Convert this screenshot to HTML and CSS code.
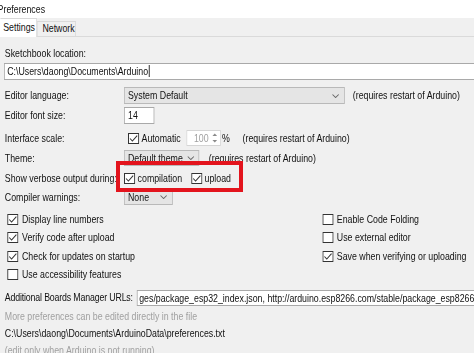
FILE: index.html
```html
<!DOCTYPE html>
<html>
<head>
<meta charset="utf-8">
<title>Preferences</title>
<link rel="stylesheet" href="styles.css">
</head>
<body>
<div class="stage">
  <div class="title">Preferences</div>
  <div class="tabs">
    <div class="tab active">Settings</div>
    <div class="tab">Network</div>
  </div>
  <div class="panel">
    <div class="top-label">Sketchbook location:</div>
    <div class="field wide path">C:\Users\daong\Documents\Arduino<span class="caret"></span></div>

    <div class="row r1">
      <span class="label">Editor language:</span>
      <div class="select lang"><span>System Default</span><svg class="chev" viewBox="0 0 7 4" preserveAspectRatio="none"><polyline points="0.5,0.5 3.5,3.5 6.5,0.5"/></svg></div>
      <span class="note">(requires restart of Arduino)</span>
    </div>
    <div class="row r2">
      <span class="label">Editor font size:</span>
      <div class="field small">14</div>
    </div>
    <div class="row r3">
      <span class="label">Interface scale:</span>
      <svg class="cb first" viewBox="0 0 11 11" preserveAspectRatio="none"><rect x="0.5" y="0.5" width="10" height="10"/><polyline points="2,5.5 4.3,8 9,2.6"/></svg>
      <span class="cb-text">Automatic</span>
      <div class="spin"><span>100</span><svg class="arrows" viewBox="0 0 6 12" preserveAspectRatio="none"><polygon points="0.5,4 3,1.5 5.5,4"/><polygon points="0.5,8 3,10.5 5.5,8"/></svg></div>
      <span class="pct">%</span>
      <span class="note n3">(requires restart of Arduino)</span>
    </div>
    <div class="row r4">
      <span class="label">Theme:</span>
      <div class="select theme"><span>Default theme</span><svg class="chev" viewBox="0 0 7 4" preserveAspectRatio="none"><polyline points="0.5,0.5 3.5,3.5 6.5,0.5"/></svg></div>
      <span class="note">(requires restart of Arduino)</span>
    </div>
    <div class="row r5">
      <span class="label">Show verbose output during:</span>
      <svg class="cb first" viewBox="0 0 11 11" preserveAspectRatio="none"><rect x="0.5" y="0.5" width="10" height="10"/><polyline points="2,5.5 4.3,8 9,2.6"/></svg>
      <span class="cb-text">compilation</span>
      <svg class="cb second" viewBox="0 0 11 11" preserveAspectRatio="none"><rect x="0.5" y="0.5" width="10" height="10"/><polyline points="2,5.5 4.3,8 9,2.6"/></svg>
      <span class="cb-text">upload</span>
    </div>
    <div class="row r6">
      <span class="label">Compiler warnings:</span>
      <div class="select none"><span>None</span><svg class="chev" viewBox="0 0 7 4" preserveAspectRatio="none"><polyline points="0.5,0.5 3.5,3.5 6.5,0.5"/></svg></div>
    </div>

    <div class="opts">
      <div class="col left">
        <div class="opt"><svg class="cb" viewBox="0 0 11 11" preserveAspectRatio="none"><rect x="0.5" y="0.5" width="10" height="10"/><polyline points="2,5.5 4.3,8 9,2.6"/></svg><span class="cb-text">Display line numbers</span></div>
        <div class="opt"><svg class="cb" viewBox="0 0 11 11" preserveAspectRatio="none"><rect x="0.5" y="0.5" width="10" height="10"/><polyline points="2,5.5 4.3,8 9,2.6"/></svg><span class="cb-text">Verify code after upload</span></div>
        <div class="opt"><svg class="cb" viewBox="0 0 11 11" preserveAspectRatio="none"><rect x="0.5" y="0.5" width="10" height="10"/><polyline points="2,5.5 4.3,8 9,2.6"/></svg><span class="cb-text">Check for updates on startup</span></div>
        <div class="opt"><svg class="cb" viewBox="0 0 11 11" preserveAspectRatio="none"><rect x="0.5" y="0.5" width="10" height="10"/></svg><span class="cb-text">Use accessibility features</span></div>
      </div>
      <div class="col right">
        <div class="opt"><svg class="cb" viewBox="0 0 11 11" preserveAspectRatio="none"><rect x="0.5" y="0.5" width="10" height="10"/></svg><span class="cb-text">Enable Code Folding</span></div>
        <div class="opt"><svg class="cb" viewBox="0 0 11 11" preserveAspectRatio="none"><rect x="0.5" y="0.5" width="10" height="10"/></svg><span class="cb-text">Use external editor</span></div>
        <div class="opt"><svg class="cb" viewBox="0 0 11 11" preserveAspectRatio="none"><rect x="0.5" y="0.5" width="10" height="10"/><polyline points="2,5.5 4.3,8 9,2.6"/></svg><span class="cb-text">Save when verifying or uploading</span></div>
      </div>
    </div>

    <div class="row urls">
      <span class="label url-label">Additional Boards Manager URLs:</span>
      <div class="field url">ges/package_esp32_index.json, http://arduino.esp8266.com/stable/package_esp8266com_index.json</div>
    </div>
    <div class="line gray first-line">More preferences can be edited directly in the file</div>
    <div class="line">C:\Users\daong\Documents\ArduinoData\preferences.txt</div>
    <div class="line gray">(edit only when Arduino is not running)</div>
  </div>
</div>
<div class="highlight"></div>
</body>
</html>
```

FILE: styles.css
```css
html, body {
  margin: 0;
  padding: 0;
  overflow: hidden;
  background: #f0f0f0;
}
body {
  width: 474px;
  height: 353px;
  position: relative;
  font-family: "Liberation Sans", Arial, sans-serif;
  font-size: 11px;
  line-height: 13px;
  color: #111;
}
.stage {
  width: 592.5px;
  transform: scaleX(0.8);
  transform-origin: 0 0;
}
.title {
  height: 18px;
  line-height: 18px;
  background: #fff;
  text-indent: -3px;
  white-space: nowrap;
}
.tabs {
  height: 18px;
  display: flex;
  align-items: flex-end;
  background: #f0f0f0;
  position: relative;
  z-index: 1;
}
.tab {
  box-sizing: border-box;
  width: 49px;
  height: 15px;
  border: 1px solid #d9d9d9;
  border-bottom: none;
  padding-left: 6px;
  background: #f0f0f0;
  white-space: nowrap;
}
.tab.active {
  width: 46px;
  height: 19px;
  padding: 2px 0 0 3px;
  margin-bottom: -1px;
  background: #fff;
  border-left-color: #fff;
}
.panel {
  border-top: 1px solid #dadada;
  padding-left: 6px;
}
.top-label {
  margin-top: 10px;
}
.field {
  box-sizing: border-box;
  background: #fff;
  border: 1px solid #a9a9a9;
  white-space: nowrap;
  overflow: hidden;
}
.field.wide {
  margin-top: 3px;
  margin-left: -1px;
  width: 720px;
  height: 17px;
  line-height: 15px;
  padding-left: 3px;
}
.caret {
  display: inline-block;
  width: 1px;
  height: 12px;
  background: #000;
  vertical-align: -2px;
  margin-left: 1px;
}
.row {
  display: flex;
  align-items: center;
  white-space: nowrap;
}
.label {
  width: 149px;
  flex: none;
}
.r1 { margin-top: 6px; height: 19px; }
.r2 { height: 20px; }
.r3 { margin-top: 3px; height: 20px; }
.r4 { height: 20px; }
.r5 { height: 20px; }
.r6 { height: 18px; }
.select {
  box-sizing: border-box;
  display: flex;
  align-items: center;
  justify-content: space-between;
  height: 17px;
  border: 1px solid #b9b9b9;
  background: #e5e5e5;
  padding: 0 6px 0 4px;
  flex: none;
}
.select.lang { width: 276px; }
.select.theme { width: 94px; height: 16px; padding-right: 5px; }
.select.none { width: 61px; height: 16px; padding-right: 6px; }
.chev {
  width: 9px;
  height: 4px;
  fill: none;
  stroke: #666;
  stroke-width: 1;
}
.note {
  margin-left: 10px;
}
.r4 .note { margin-left: 12px; }
.field.small {
  width: 37.5px;
  height: 17px;
  line-height: 15px;
  padding-left: 4px;
}
.cb {
  width: 14px;
  height: 11px;
  flex: none;
  display: block;
  fill: #fff;
  stroke: #333;
  stroke-width: 1;
}
.cb polyline {
  fill: none;
  stroke: #333;
}
.cb.first { margin-left: 5px; }
.r5 .cb.first { margin-left: 0; }
.cb-text { margin-left: 3px; }
.cb.second { margin-left: 11px; }
.spin {
  box-sizing: border-box;
  width: 42.5px;
  height: 16px;
  margin-left: 7.5px;
  border: 1px solid #d5d5d5;
  background: #fff;
  display: flex;
  align-items: center;
  justify-content: space-between;
  padding: 0 3px 0 8px;
  color: #a0a0a0;
}
.arrows {
  width: 7px;
  height: 12px;
  fill: #8a8a8a;
}
.pct { margin-left: 1.5px; }
.note.n3 { margin-left: 16px; }
.opts {
  display: flex;
  margin-top: 4px;
}
.col {
  display: flex;
  flex-direction: column;
}
.col.left {
  width: 393.5px;
  padding-left: 3px;
}
.opt {
  height: 18.5px;
  display: flex;
  align-items: center;
  white-space: nowrap;
}
.opt .cb-text { margin-left: 4.5px; }
.urls {
  margin-top: 5px;
  height: 17px;
}
.url-label {
  width: 165px;
  letter-spacing: -0.2px;
}
.field.url {
  width: 560px;
  height: 16px;
  line-height: 14px;
  padding-left: 2px;
  flex: none;
}
.line {
  height: 17px;
  line-height: 17px;
  white-space: nowrap;
}
.first-line { margin-top: 1.5px; }
.gray { color: #a0a0a0; }
.highlight {
  position: absolute;
  left: 116px;
  top: 161px;
  width: 127px;
  height: 31px;
  box-sizing: border-box;
  border: 4px solid #e3141d;
}
```
